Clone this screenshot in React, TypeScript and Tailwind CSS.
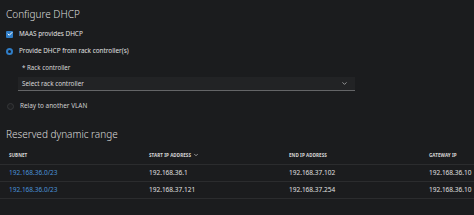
import { Check, ChevronDown } from 'lucide-react'

const rows = [
  { subnet: '192.168.36.0/23', start: '192.168.36.1', end: '192.168.37.102', gateway: '192.168.36.10' },
  { subnet: '192.168.36.0/23', start: '192.168.37.121', end: '192.168.37.254', gateway: '192.168.36.10' },
]

function Radio({ checked }: { checked?: boolean }) {
  return checked ? (
    <span className="w-[7px] h-[7px] rounded-full bg-[#2f7dc7] flex items-center justify-center">
      <span className="w-[3px] h-[3px] rounded-full bg-[#1b1c1e]" />
    </span>
  ) : (
    <span className="w-[7px] h-[7px] rounded-full border border-[#36373a] bg-[#1f2022]" />
  )
}

export default function App() {
  return (
    <div
      className="w-[474px] h-[215px] overflow-hidden bg-[#1b1c1e] text-[#e6e6e6] flex flex-col"
      style={{ fontFamily: '"Noto Sans", "Open Sans", sans-serif' }}
    >
      {/* Configure DHCP */}
      <h2 className="h-[28px] flex items-center pl-[6px] text-[10px] font-light text-[#dcdcdc]">
        Configure DHCP
      </h2>

      <div className="pl-[6px] flex flex-col">
        <label className="flex items-center gap-[6px] h-[12px] text-[6.4px] text-[#e0e0e0]">
          <span className="w-[7px] h-[7px] rounded-[1px] bg-[#2f7dc7] flex items-center justify-center">
            <Check className="w-[6px] h-[6px] text-white" strokeWidth={4} />
          </span>
          MAAS provides DHCP
        </label>
        <label className="mt-[5px] flex items-center gap-[6px] h-[12px] text-[6.4px] text-[#e0e0e0]">
          <Radio checked />
          Provide DHCP from rack controller(s)
        </label>

        <div className="pl-[12px]">
          <div className="mt-[5px] h-[12px] flex items-center pl-[4px] text-[6.2px] text-[#d8d8d8]">
            * Rack controller
          </div>
          <div className="mt-[3px] w-[337px] h-[14px] bg-[#222325] border-b border-[#646567] flex items-center justify-between pl-[4px] pr-[7px] text-[6.3px] text-[#d8d8d8]">
            <span>Select rack controller</span>
            <ChevronDown className="w-[7px] h-[7px] text-[#bdbdbd]" strokeWidth={2.5} />
          </div>
        </div>

        <label className="mt-[9px] flex items-center gap-[6px] h-[12px] text-[6.4px] text-[#cfcfcf] pl-[1px]">
          <Radio />
          Relay to another VLAN
        </label>
      </div>

      {/* Reserved dynamic range */}
      <h2 className="mt-[12px] h-[20px] flex items-center pl-[6px] text-[10px] font-light text-[#dcdcdc]">
        Reserved dynamic range
      </h2>

      <div className="mt-[3px] w-[560px]">
        <div className="grid grid-cols-[140px_140px_140px_140px] h-[18px] items-center border-b border-[#2b2c2e] pl-[9px] text-[4.6px] font-bold tracking-[0.01em] text-[#d6d6d6]">
          <span>SUBNET</span>
          <span className="flex items-center gap-[2px]">
            START IP ADDRESS
            <ChevronDown className="w-[6px] h-[6px]" strokeWidth={2.5} />
          </span>
          <span>END IP ADDRESS</span>
          <span>GATEWAY IP</span>
        </div>
        {rows.map((r, i) => (
          <div
            key={i}
            className="grid grid-cols-[140px_140px_140px_140px] h-[17px] items-center border-b border-[#2b2c2e] pl-[9px] text-[6.5px] text-[#e0e0e0]"
          >
            <span className="text-[#4a93da]">{r.subnet}</span>
            <span>{r.start}</span>
            <span>{r.end}</span>
            <span>{r.gateway}</span>
          </div>
        ))}
      </div>
    </div>
  )
}
